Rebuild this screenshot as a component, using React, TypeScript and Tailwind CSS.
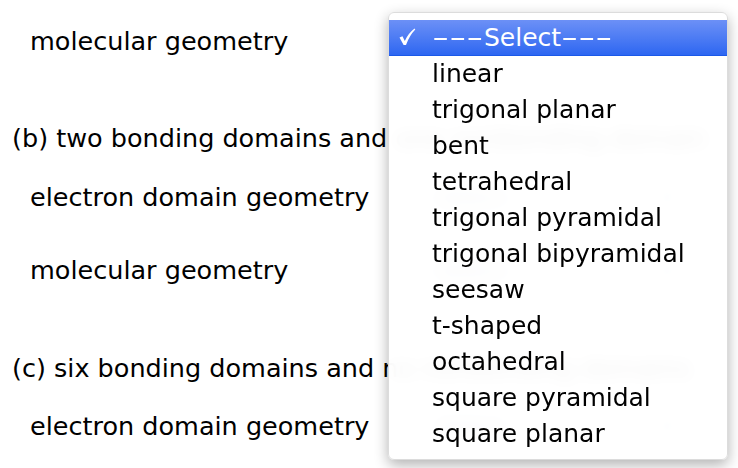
import React from "react";

const OPTIONS = [
  "linear",
  "trigonal planar",
  "bent",
  "tetrahedral",
  "trigonal pyramidal",
  "trigonal bipyramidal",
  "seesaw",
  "t-shaped",
  "octahedral",
  "square pyramidal",
  "square planar",
];

// Lucida's hyphens are much wider than DejaVu's, stretch them a bit
const Dashes = () => (
  <span className="inline-block w-[52px] overflow-visible">
    <span className="inline-block origin-left scale-x-[1.9]">---</span>
  </span>
);

const FakeSelect = () => (
  <div className="w-[280px] h-[32px] rounded-md border border-gray-300 bg-white flex items-center justify-between px-3 text-[20px] text-gray-700 shadow-sm">
    <span>---Select---</span>
    <svg width="10" height="18" viewBox="0 0 10 18" className="text-gray-700">
      <path d="M1 7 L5 2 L9 7 Z M1 11 L5 16 L9 11 Z" fill="currentColor" />
    </svg>
  </div>
);

const Row = ({ label, select, className }: { label: string; select?: boolean; className?: string }) => (
  <div className={`flex items-center h-[36px] ${className || ""}`}>
    <div className={select ? "w-[405px] shrink-0 pl-[30px] whitespace-nowrap" : "pl-[12px] whitespace-nowrap"}>{label}</div>
    {select && <FakeSelect />}
  </div>
);

export default function App() {
  return (
    <div
      className="relative w-[738px] h-[468px] overflow-hidden bg-white text-black text-[25.5px]"
      style={{ fontFamily: '"DejaVu Sans", Verdana, sans-serif' }}
    >
      {/* page behind the open menu */}
      <div className="flex flex-col pt-[23px]">
        <Row label="molecular geometry" select />
        <Row label="(b) two bonding domains and one nonbonding domain" className="mt-[61px]" />
        <Row label="electron domain geometry" select className="mt-[23px]" />
        <Row label="molecular geometry" select className="mt-[37px]" />
        <Row label="(c) six bonding domains and no nonbonding domains" className="mt-[62px]" />
        <Row label="electron domain geometry" select className="mt-[22px]" />
      </div>

      {/* open select menu */}
      <div className="absolute left-[388px] top-[12px] w-[340px] h-[448px] rounded-[6px] border border-[#dcdcdc] bg-white/95 backdrop-blur-sm shadow-[0_5px_14px_rgba(0,0,0,0.3)] pt-[7px] text-[25px]">
        <div className="relative h-[36px] flex items-center pl-[43px] text-white bg-gradient-to-b from-[#6c90f6] to-[#2d66f1] border-b border-[#1b58e8]">
          <svg width="18" height="18" viewBox="0 0 18 18" className="absolute left-[9px] top-[8px]">
            <path d="M1.5 9.5 L4.5 8.3 L6.8 13 Q10 5.5 16.5 0.5 L17.3 1.6 Q11.5 7.5 8 17 L5.6 17 Z" fill="white" />
          </svg>
          <span className="whitespace-nowrap">
            <Dashes />Select<Dashes />
          </span>
        </div>
        {OPTIONS.map((o) => (
          <div key={o} className="h-[36px] flex items-center pl-[43px] whitespace-nowrap">
            {o}
          </div>
        ))}
      </div>
    </div>
  );
}
